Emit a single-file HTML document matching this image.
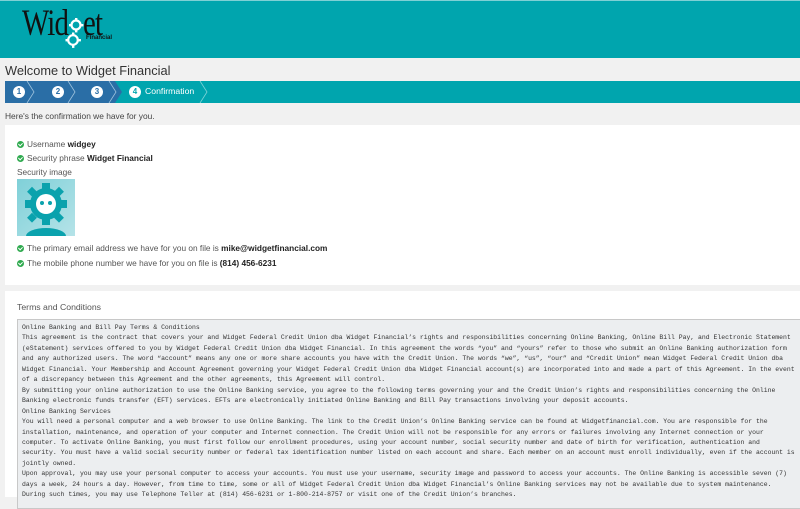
<!DOCTYPE html>
<html><head><meta charset="utf-8"><style>
*{margin:0;padding:0;box-sizing:border-box}
body{width:800px;height:497px;overflow:hidden;background:#f1f1f1;font-family:"Liberation Sans",sans-serif;color:#333;position:relative}
.hdr{position:absolute;left:0;top:0;width:800px;height:58px;background:#00a5ae;border-top:1px solid #7fd0d5}
.logo{position:absolute;top:1px;font-family:"Liberation Serif",serif;font-size:37px;color:#111;letter-spacing:-1px;transform:scaleX(0.78);transform-origin:0 0}
.fin{position:absolute;left:86px;top:34px;font-size:6px;font-weight:bold;color:#111}
h1{position:absolute;left:5px;top:63px;font-size:12.8px;font-weight:normal;color:#333}
.bar{position:absolute;left:5px;top:81px;width:795px;height:22px;background:#00a5ae}
.blue{position:absolute;left:0;top:0;height:22px;width:110px;background:#2a6ea6}
.num{position:absolute;top:5px;width:12px;height:12px;border-radius:50%;background:#fff;color:#2a6ea6;font-size:8px;font-weight:bold;text-align:center;line-height:12px}
.sub{position:absolute;left:5px;top:111px;font-size:8.4px;color:#444}
.p1{position:absolute;left:5px;top:125px;width:795px;height:160px;background:#fff}
.row{position:absolute;left:12px;font-size:8.3px;color:#555;white-space:nowrap}
.row b{color:#222}
.ck{display:inline-block;width:7px;height:7px;border-radius:50%;background:#2faa4f;vertical-align:-1px;margin-right:3px;position:relative}
.ck:after{content:"";position:absolute;left:2px;top:1px;width:2px;height:3px;border:solid #fff;border-width:0 1px 1px 0;transform:rotate(45deg)}
.p2{position:absolute;left:5px;top:291px;width:795px;height:206px;background:#fff}
.tc{position:absolute;left:12px;top:11px;font-size:8.7px;color:#555}
.ta{position:absolute;left:12px;top:28px;width:790px;height:190px;background:#eceef0;border:1px solid #c8c8c8;padding:3px 0 0 4px;font-family:"Liberation Mono",monospace;font-size:6.45px;line-height:10.45px;color:#333;white-space:pre;overflow:hidden}
</style></head><body>
<div class="hdr">
<div class="logo" style="left:22px">Wid</div>
<div class="logo" style="left:83px">et</div>
<svg style="position:absolute;left:64px;top:14px" width="22" height="34" viewBox="0 0 22 34"><g fill="none" stroke="#fff" stroke-width="2.2"><circle cx="12" cy="10" r="4.5"/><circle cx="9" cy="25" r="4.8"/></g><g fill="#fff"><rect x="11" y="3" width="2.4" height="2.4"/><rect x="17" y="9" width="2.4" height="2.4"/><rect x="5" y="9" width="2.4" height="2.4"/><rect x="11" y="15" width="2.4" height="2.4"/><rect x="8" y="17.5" width="2.4" height="2.4"/><rect x="14.5" y="24" width="2.4" height="2.4"/><rect x="1.5" y="24" width="2.4" height="2.4"/><rect x="8" y="30.5" width="2.4" height="2.4"/></g></svg>
<div class="fin">Financial</div>
</div>
<h1>Welcome to Widget Financial</h1>
<div class="bar">
<div class="blue"></div>
<svg style="position:absolute;left:0;top:0" width="220" height="22"><polygon points="110,0 117,11 110,22" fill="#2a6ea6"/><g fill="none" stroke="#9fc3dd" stroke-width="0.8"><polyline points="22,0 29,11 22,22"/><polyline points="63,0 70,11 63,22"/><polyline points="104,0 111,11 104,22"/></g><polyline points="195,0 202,11 195,22" fill="none" stroke="#7fd3d8" stroke-width="0.8"/></svg>
<div class="num" style="left:8px">1</div>
<div class="num" style="left:47px">2</div>
<div class="num" style="left:86px">3</div>
<div class="num" style="left:124px;color:#00a5ae">4</div>
<div style="position:absolute;left:140px;top:5px;font-size:8.7px;color:#fff">Confirmation</div>
</div>
<div class="sub">Here's the confirmation we have for you.</div>
<div class="p1">
<div class="row" style="top:14px"><span class="ck"></span>Username <b>widgey</b></div>
<div class="row" style="top:28px"><span class="ck"></span>Security phrase <b>Widget Financial</b></div>
<div class="row" style="top:42px">Security image</div>
<svg style="position:absolute;left:12px;top:54px" width="58" height="57" viewBox="0 0 58 57"><defs><linearGradient id="g" x1="0" y1="0" x2="1" y2="1"><stop offset="0" stop-color="#7fd0d8"/><stop offset="1" stop-color="#b5e3e8"/></linearGradient></defs><rect width="58" height="57" fill="url(#g)"/><g fill="#0aa2ad"><circle cx="29" cy="25" r="16"/><rect x="25" y="4" width="8" height="8"/><rect x="25" y="38" width="8" height="8"/><rect x="8" y="21" width="8" height="8"/><rect x="42" y="21" width="8" height="8"/><rect x="12" y="9" width="7" height="7" transform="rotate(45 15 12)"/><rect x="39" y="9" width="7" height="7" transform="rotate(45 42 12)"/><rect x="12" y="35" width="7" height="7" transform="rotate(45 15 38)"/><rect x="39" y="35" width="7" height="7" transform="rotate(45 42 38)"/><ellipse cx="29" cy="57" rx="20" ry="8"/></g><circle cx="29" cy="25" r="10" fill="#fff"/><circle cx="25" cy="24" r="2" fill="#0aa2ad"/><circle cx="33" cy="24" r="2" fill="#0aa2ad"/></svg>
<div class="row" style="top:118px"><span class="ck"></span>The primary email address we have for you on file is <b>mike@widgetfinancial.com</b></div>
<div class="row" style="top:133px"><span class="ck"></span>The mobile phone number we have for you on file is <b>(814) 456-6231</b></div>
</div>
<div class="p2">
<div class="tc">Terms and Conditions</div>
<div class="ta">Online Banking and Bill Pay Terms &amp; Conditions
This agreement is the contract that covers your and Widget Federal Credit Union dba Widget Financial’s rights and responsibilities concerning Online Banking, Online Bill Pay, and Electronic Statement
(eStatement) services offered to you by Widget Federal Credit Union dba Widget Financial. In this agreement the words “you” and “yours” refer to those who submit an Online Banking authorization form
and any authorized users. The word “account” means any one or more share accounts you have with the Credit Union. The words “we”, “us”, “our” and “Credit Union” mean Widget Federal Credit Union dba
Widget Financial. Your Membership and Account Agreement governing your Widget Federal Credit Union dba Widget Financial account(s) are incorporated into and made a part of this Agreement. In the event
of a discrepancy between this Agreement and the other agreements, this Agreement will control.
By submitting your online authorization to use the Online Banking service, you agree to the following terms governing your and the Credit Union’s rights and responsibilities concerning the Online
Banking electronic funds transfer (EFT) services. EFTs are electronically initiated Online Banking and Bill Pay transactions involving your deposit accounts.
Online Banking Services
You will need a personal computer and a web browser to use Online Banking. The link to the Credit Union’s Online Banking service can be found at Widgetfinancial.com. You are responsible for the
installation, maintenance, and operation of your computer and Internet connection. The Credit Union will not be responsible for any errors or failures involving any Internet connection or your
computer. To activate Online Banking, you must first follow our enrollment procedures, using your account number, social security number and date of birth for verification, authentication and
security. You must have a valid social security number or federal tax identification number listed on each account and share. Each member on an account must enroll individually, even if the account is
jointly owned.
Upon approval, you may use your personal computer to access your accounts. You must use your username, security image and password to access your accounts. The Online Banking is accessible seven (7)
days a week, 24 hours a day. However, from time to time, some or all of Widget Federal Credit Union dba Widget Financial’s Online Banking services may not be available due to system maintenance.
During such times, you may use Telephone Teller at (814) 456-6231 or 1-800-214-8757 or visit one of the Credit Union’s branches.</div>
</div>
</body></html>
